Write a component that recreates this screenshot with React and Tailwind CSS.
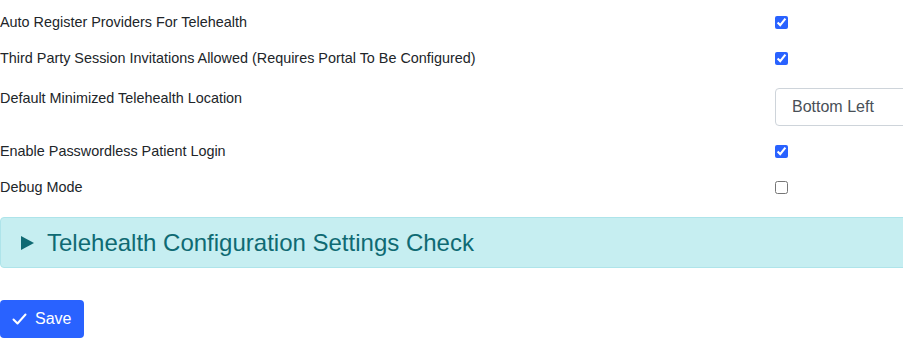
import { useState } from 'react';

const ROWS = [
  { id: 'auto_register', label: 'Auto Register Providers For Telehealth', type: 'checkbox', checked: true },
  { id: 'third_party', label: 'Third Party Session Invitations Allowed (Requires Portal To Be Configured)', type: 'checkbox', checked: true },
  { id: 'minimized_location', label: 'Default Minimized Telehealth Location', type: 'select', value: 'Bottom Left' },
  { id: 'passwordless', label: 'Enable Passwordless Patient Login', type: 'checkbox', checked: true },
  { id: 'debug', label: 'Debug Mode', type: 'checkbox', checked: false },
];

export default function App() {
  const [values, setValues] = useState(() => Object.fromEntries(ROWS.map(r => [r.id, r.type === 'checkbox' ? r.checked : r.value])));
  const [open, setOpen] = useState(false);

  return (
    <div className="w-[903px] h-[348px] overflow-hidden bg-white font-['Liberation_Sans',Arial,sans-serif] text-[#212529]">
      <div className="w-[1040px] pt-[12px]">
        {ROWS.map(row => (
          <div
            key={row.id}
            className={`grid grid-cols-[775px_1fr] ${row.type === 'select' ? 'mt-[19px] mb-[15px]' : 'mb-[15px]'}`}
          >
            <label htmlFor={row.id} className="text-[14.4px] leading-[21px]">{row.label}</label>
            <div className={row.type === 'select' ? '' : 'flex items-center h-[21px]'}>
              {row.type === 'checkbox' ? (
                <input
                  id={row.id}
                  type="checkbox"
                  checked={values[row.id]}
                  onChange={e => setValues(v => ({ ...v, [row.id]: e.target.checked }))}
                  className="w-[13px] h-[13px] m-0 accent-[#2962ff]"
                />
              ) : (
                <select
                  id={row.id}
                  value={values[row.id]}
                  onChange={e => setValues(v => ({ ...v, [row.id]: e.target.value }))}
                  className="appearance-none w-[240px] h-[38px] pl-[16px] pr-3 border border-[#ced4da] rounded-[4px] bg-white text-[16px] text-[#495057] outline-none"
                >
                  <option>Bottom Left</option>
                  <option>Bottom Right</option>
                  <option>Top Left</option>
                  <option>Top Right</option>
                </select>
              )}
            </div>
          </div>
        ))}

        <div className="mt-[19px] border border-[#aee4ea] bg-[#c6eef1] rounded-[4px] h-[51px] flex items-center pl-[20px] text-[#0f6a73]">
          <button onClick={() => setOpen(!open)} className="flex items-center gap-[13px]">
            <svg width="13" height="14" viewBox="0 0 13 14" className={open ? 'rotate-90' : ''}>
              <polygon points="0,0 13,7 0,14" fill="currentColor" />
            </svg>
            <span className="text-[24px] leading-[28px]">Telehealth Configuration Settings Check</span>
          </button>
        </div>

        <button className="mt-[32px] h-[38px] w-[84px] bg-[#2962ff] rounded-[4px] text-white flex items-center pl-[12px] gap-[8px] text-[16px]">
          <svg width="15" height="12" viewBox="0 0 15 12" fill="none" stroke="currentColor" strokeWidth="2" strokeLinecap="round" strokeLinejoin="round">
            <path d="M1.5 6.5 L5.5 10.5 L13.5 1.5" />
          </svg>
          Save
        </button>
      </div>
    </div>
  );
}
